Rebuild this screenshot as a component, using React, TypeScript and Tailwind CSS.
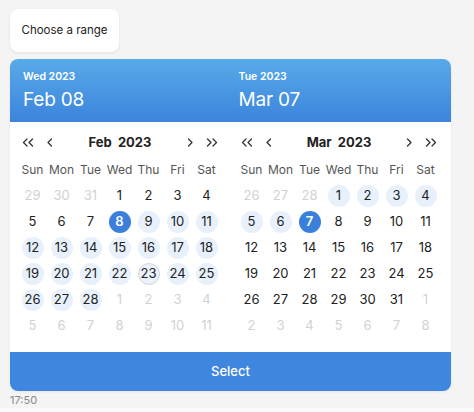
import React from "react";

type Cell = { d: number; muted?: boolean; sel?: boolean; range?: boolean; ring?: boolean };

const WEEK = ["Sun", "Mon", "Tue", "Wed", "Thu", "Fri", "Sat"];

function build(prevTail: number[], count: number, nextCount: number, selDay: number, rangeFrom: number, rangeTo: number, ringDay?: number): Cell[] {
  const cells: Cell[] = [];
  prevTail.forEach((d) => cells.push({ d, muted: true }));
  for (let d = 1; d <= count; d++) {
    cells.push({
      d,
      sel: d === selDay,
      range: d !== selDay && d >= rangeFrom && d <= rangeTo,
      ring: d === ringDay,
    });
  }
  for (let d = 1; d <= nextCount; d++) cells.push({ d, muted: true });
  return cells;
}

const feb = build([29, 30, 31], 28, 11, 8, 9, 28, 23);
const mar = build([26, 27, 28], 31, 8, 7, 1, 6);

function DoubleLeft() {
  return (
    <svg width="12" height="9" viewBox="0 0 12 9" fill="none" stroke="#333" strokeWidth="1.3" strokeLinecap="round" strokeLinejoin="round">
      <path d="M5 1 L1.5 4.5 L5 8" />
      <path d="M10.5 1 L7 4.5 L10.5 8" />
    </svg>
  );
}
function DoubleRight() {
  return (
    <svg width="12" height="9" viewBox="0 0 12 9" fill="none" stroke="#333" strokeWidth="1.3" strokeLinecap="round" strokeLinejoin="round">
      <path d="M1.5 1 L5 4.5 L1.5 8" />
      <path d="M7 1 L10.5 4.5 L7 8" />
    </svg>
  );
}
function Left() {
  return (
    <svg width="6" height="9" viewBox="0 0 6 9" fill="none" stroke="#333" strokeWidth="1.3" strokeLinecap="round" strokeLinejoin="round">
      <path d="M4.5 1 L1 4.5 L4.5 8" />
    </svg>
  );
}
function Right() {
  return (
    <svg width="6" height="9" viewBox="0 0 6 9" fill="none" stroke="#333" strokeWidth="1.3" strokeLinecap="round" strokeLinejoin="round">
      <path d="M1.5 1 L5 4.5 L1.5 8" />
    </svg>
  );
}

function Day({ c }: { c: Cell }) {
  let cls = "w-[22px] h-[22px] rounded-full flex items-center justify-center text-[13px] ";
  if (c.muted) cls += "text-[#d2d2d2]";
  else if (c.sel) cls += "bg-[#3a7fdc] text-white font-semibold";
  else if (c.range && c.ring) cls += "bg-[#ebf2fb] text-[#222] border border-[#d4d4d4]";
  else if (c.range) cls += "bg-[#e8f1fb] text-[#222]";
  else cls += "text-[#222]";
  return (
    <div className="h-[26px] flex items-center justify-center">
      <div className={cls}>{c.d}</div>
    </div>
  );
}

function Calendar({ title, cells }: { title: string; cells: Cell[] }) {
  return (
    <div className="w-[203px]">
      <div className="h-[27px] flex items-center pl-[4px]">
        <div className="flex items-center gap-[13px]">
          <DoubleLeft />
          <Left />
        </div>
        <div className="flex-1 text-center text-[13px] font-bold text-[#222] whitespace-pre">{title}</div>
        <div className="flex items-center gap-[13px] pr-[3px]">
          <Right />
          <DoubleRight />
        </div>
      </div>
      <div className="grid grid-cols-7 h-[27px] items-center">
        {WEEK.map((w) => (
          <div key={w} className="text-center text-[12px] text-[#555]">
            {w}
          </div>
        ))}
      </div>
      <div className="grid grid-cols-7">
        {cells.map((c, i) => (
          <Day key={i} c={c} />
        ))}
      </div>
    </div>
  );
}

export default function App() {
  return (
    <div className="min-h-[412px] bg-[#fafafa] font-['Inter',sans-serif]">
      <div className="h-[408px] bg-[#f4f4f4] pt-[9px] px-[10px]">
        <div className="w-[109px] h-[43px] bg-white rounded-lg shadow-[0_1px_3px_rgba(0,0,0,0.08)] flex items-center justify-center text-[11.5px] text-[#222]">
          Choose a range
        </div>
        <div className="mt-[7px] w-[441px] bg-white rounded-lg shadow-[0_1px_3px_rgba(0,0,0,0.06)]">
          <div className="h-[63px] rounded-t-lg bg-gradient-to-b from-[#59aae8] to-[#3c84dc] grid grid-cols-2 gap-4 px-[13px] text-white">
            <div className="pt-[11px]">
              <div className="text-[10.5px] leading-[14px] font-semibold">Wed 2023</div>
              <div className="mt-[4px] text-[19px] leading-[24px] tracking-[-0.2px]">Feb 08</div>
            </div>
            <div className="pt-[11px]">
              <div className="text-[10.5px] leading-[14px] font-semibold">Tue 2023</div>
              <div className="mt-[4px] text-[19px] leading-[24px] tracking-[-0.2px]">Mar 07</div>
            </div>
          </div>
          <div className="flex gap-4 pl-2 pt-[7px] pb-[13px]">
            <Calendar title={"Feb  2023"} cells={feb} />
            <Calendar title={"Mar  2023"} cells={mar} />
          </div>
          <div className="h-[39px] rounded-b-lg bg-[#3f86df] flex items-center justify-center text-white text-[13px] font-medium">
            Select
          </div>
        </div>
        <div className="mt-[2px] text-[11px] leading-[14px] text-[#888]">17:50</div>
      </div>
    </div>
  );
}
